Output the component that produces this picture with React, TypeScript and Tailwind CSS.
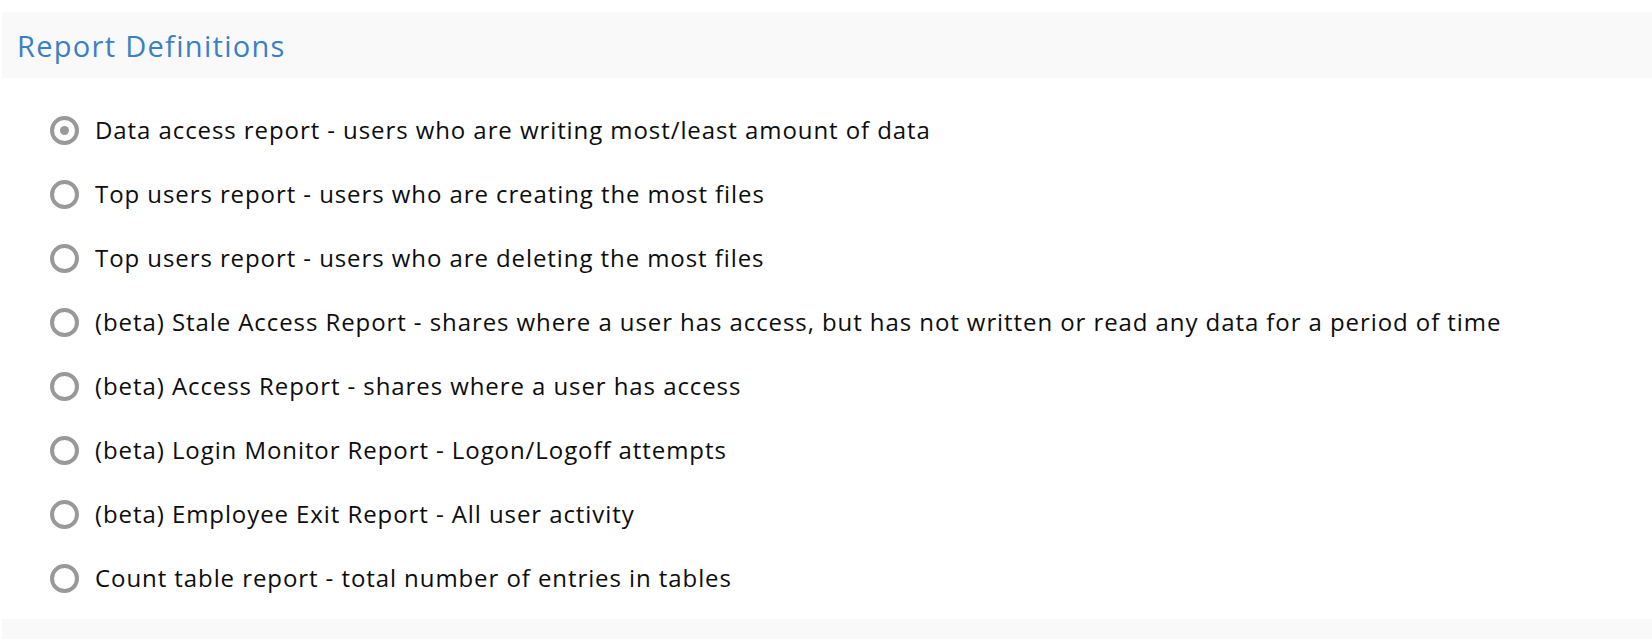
import { useState } from 'react'

const reports = [
  'Data access report - users who are writing most/least amount of data',
  'Top users report - users who are creating the most files',
  'Top users report - users who are deleting the most files',
  '(beta) Stale Access Report - shares where a user has access, but has not written or read any data for a period of time',
  '(beta) Access Report - shares where a user has access',
  '(beta) Login Monitor Report - Logon/Logoff attempts',
  '(beta) Employee Exit Report - All user activity',
  'Count table report - total number of entries in tables',
]

function Radio({ checked }: { checked: boolean }) {
  return (
    <span className="flex h-[29px] w-[29px] shrink-0 items-center justify-center rounded-full border-4 border-[#999999] bg-white">
      {checked && <span className="h-[9px] w-[9px] rounded-full bg-[#999999]" />}
    </span>
  )
}

export default function App() {
  const [selected, setSelected] = useState(0)

  return (
    <div className="min-h-[640px] bg-white pl-[2px] pt-[12px] font-['Open_Sans',sans-serif]">
      <div className="flex h-[66px] items-center bg-[#f9f9f9] px-[15px]">
        <h2 className="text-[29px] leading-none tracking-[1.3px] text-[#3b7fc6]">Report Definitions</h2>
      </div>

      <div className="flex flex-col pb-[9px] pl-[48px] pt-[20px]">
        {reports.map((r, i) => (
          <label
            key={r}
            className="flex h-[64px] cursor-pointer items-center gap-[16px]"
            onClick={() => setSelected(i)}
          >
            <Radio checked={selected === i} />
            <span className="text-[24px] tracking-[0.92px] text-[#0d0d0d]">{r}</span>
          </label>
        ))}
      </div>

      <div className="h-[20px] bg-[#f9f9f9]" />
    </div>
  )
}
